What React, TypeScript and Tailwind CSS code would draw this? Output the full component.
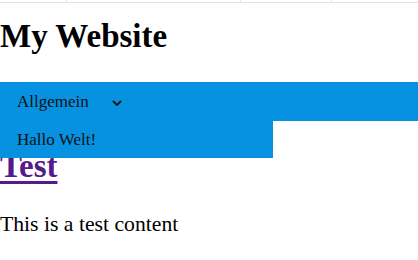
import React from "react";

export default function App() {
  return (
    <div className="relative min-h-[260px] bg-white text-black [font-family:'Liberation_Serif','Times_New_Roman',serif]">
      <div className="flex h-[3px] border-b border-[#e3e3e3]">
        <div className="w-[67px] border-r border-[#e3e3e3]" />
        <div className="w-[174px] border-r border-[#e3e3e3]" />
        <div className="w-[91px] border-r border-[#e3e3e3]" />
        <div className="flex-1" />
      </div>
      <h1 className="mt-[15px] text-[33px] font-bold leading-[37px]">My Website</h1>
      <nav className="relative mt-[27px] h-[39px] bg-[#0791e1]">
        <div className="flex h-full items-center pl-[17px] text-[17px] text-[#111]">
          <span>Allgemein</span>
          <svg className="ml-[23px] mt-[3px]" width="10" height="6" viewBox="0 0 10 6" fill="none">
            <path d="M1 1 L5 5 L9 1" stroke="#1a1a1a" strokeWidth="2" />
          </svg>
        </div>
        <div className="absolute left-0 top-[39px] flex h-[37px] w-[273px] items-center bg-[#0791e1] pl-[17px] text-[17px] text-[#111]">
          Hallo Welt!
        </div>
      </nav>
      <h2 className="mt-[27px] text-[33px] font-bold leading-[37px]">
        <a href="#" className="text-[#551a8b] underline decoration-[3px] underline-offset-[4px]">Test</a>
      </h2>
      <p className="mt-[27px] text-[21.7px] leading-[25px]">This is a test content</p>
    </div>
  );
}
